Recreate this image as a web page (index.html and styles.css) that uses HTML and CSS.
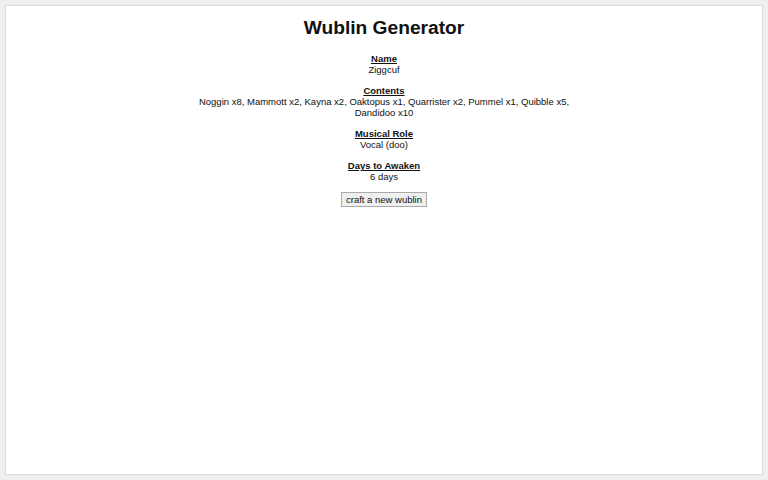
FILE: index.html
```html
<!doctype html>
<html>
<head>
<title>Wublin Generator</title>
<link rel="stylesheet" href="styles.css">
</head>
<body>
<div class="sheet">
  <h1>Wublin Generator</h1>

  <div class="result">
    <p>
      <span class="label">Name</span><br>
      Ziggcuf
    </p>
    <p>
      <span class="label">Contents</span><br>
      Noggin x8, Mammott x2, Kayna x2, Oaktopus x1, Quarrister x2, Pummel x1, Quibble x5, Dandidoo x10
    </p>
    <p>
      <span class="label">Musical Role</span><br>
      Vocal (doo)
    </p>
    <p>
      <span class="label">Days to Awaken</span><br>
      6 days
    </p>
    <button class="craft">craft a new wublin</button>
  </div>
</div>
</body>
</html>
```

FILE: styles.css
```css
html, body {
  margin: 0;
  height: 100%;
}

body {
  background: #f0f0f0;
  padding: 5px;
  box-sizing: border-box;
  font-family: "Liberation Sans", Arial, sans-serif;
  font-size: 9.5px;
  color: #111;
}

.sheet {
  background: #fff;
  border: 1px solid #dcdcdc;
  height: 100%;
  box-sizing: border-box;
  text-align: center;
  padding-top: 11px;
}

h1 {
  font-size: 19.2px;
  margin: 0 0 14px 0;
}

.result {
  width: 380px;
  margin: 0 auto;
}

.result p {
  margin: 0 0 10px 0;
  line-height: 11px;
}

.label {
  font-weight: bold;
  text-decoration: underline;
}

.craft {
  font-family: "Liberation Sans", Arial, sans-serif;
  font-size: 9.5px;
  padding: 1px 4px;
  background: #efefef;
  border: 1px solid #aaa;
  border-radius: 0;
  color: #111;
}
```
